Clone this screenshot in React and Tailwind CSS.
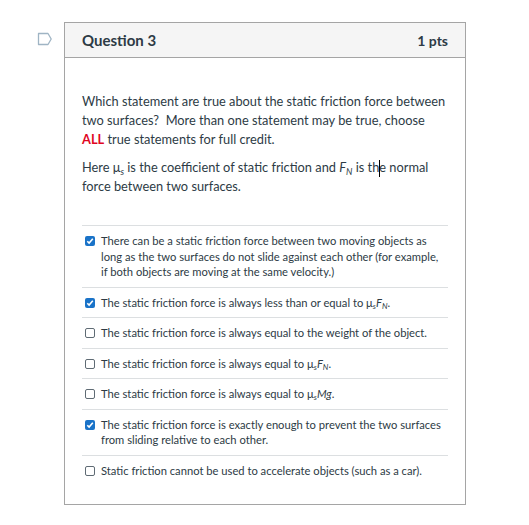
import React from "react";

const Check = ({ checked }) =>
  checked ? (
    <span className="mt-[3px] flex h-[10px] w-[10px] shrink-0 items-center justify-center rounded-[2px] bg-[#1a73c8]">
      <svg width="8" height="8" viewBox="0 0 8 8">
        <path d="M1.3 4.2 L3.1 6 L6.8 1.8" fill="none" stroke="white" strokeWidth="1.6" />
      </svg>
    </span>
  ) : (
    <span className="mt-[3px] h-[10px] w-[10px] shrink-0 rounded-[2px] border border-[#5f6b74] bg-white" />
  );

const Sub = ({ children }) => (
  <span className="relative top-[0.3em] text-[0.7em] italic leading-none">{children}</span>
);

const Mu = () => (
  <span>
    μ<Sub>s</Sub>
  </span>
);
const FN = () => (
  <span>
    <i>F</i>
    <Sub>N</Sub>
  </span>
);

const answers = [
  {
    checked: true,
    text: "There can be a static friction force between two moving objects as long as the two surfaces do not slide against each other (for example, if both objects are moving at the same velocity.)",
  },
  {
    checked: true,
    text: (
      <>
        The static friction force is always less than or equal to <Mu />
        <FN />.
      </>
    ),
  },
  { checked: false, text: "The static friction force is always equal to the weight of the object." },
  {
    checked: false,
    text: (
      <>
        The static friction force is always equal to <Mu />
        <FN />.
      </>
    ),
  },
  {
    checked: false,
    text: (
      <>
        The static friction force is always equal to <Mu />
        <i>Mg</i>.
      </>
    ),
  },
  {
    checked: true,
    text: "The static friction force is exactly enough to prevent the two surfaces from sliding relative to each other.",
  },
  { checked: false, text: "Static friction cannot be used to accelerate objects (such as a car)." },
];

export default function App() {
  return (
    <div className="min-h-[525px] w-[529px] bg-white pt-[22px] pl-[37px] font-['Lato','Noto_Sans',sans-serif] text-[#2d3b45]">
      <div className="flex">
        <div className="w-[27px] pt-[10px]">
          <svg width="16" height="14" viewBox="0 0 16 14">
            <path d="M1.5 1.5 H11 L14.2 7 L11 12.5 H1.5 Z" fill="none" stroke="#9fb4c4" strokeWidth="1.3" strokeLinejoin="round" />
          </svg>
        </div>
        <div className="w-[402px] border border-[#a5a5a5]">
          <div className="flex h-[35px] items-center justify-between border-b border-[#a5a5a5] bg-[#f5f5f5] px-[17px]">
            <span className="text-[15px] font-bold">Question 3</span>
            <span className="text-[14px] font-bold">1 pts</span>
          </div>
          <div className="px-[17px] pt-[34px] pb-[19px]">
            <p className="text-[12.8px] leading-[19px]">
              Which statement are true about the static friction force between two surfaces?&nbsp; More than one statement may be true, choose{" "}
              <span className="font-bold text-[#e0061f]">ALL</span> true statements for full credit.
            </p>
            <p className="mt-[9px] text-[12.8px] leading-[19px]">
              Here <Mu /> is the coefficient of static friction and <FN /> is th
              <span className="relative inline-block w-0 align-middle">
                <span className="absolute left-0 top-[-9px] h-[17px] w-px bg-black" />
              </span>
              e normal force between two surfaces.
            </p>
            <div className="mt-[29px] border-t border-[#dcdfe1]">
              {answers.map((a, i) => (
                <div key={i} className="flex gap-[6px] border-b border-[#dcdfe1] py-[7px] pl-[3px] pr-[2px] last:border-b-0 text-[11.2px] leading-[15.5px]">
                  <Check checked={a.checked} />
                  <span>{a.text}</span>
                </div>
              ))}
            </div>
          </div>
        </div>
      </div>
    </div>
  );
}
